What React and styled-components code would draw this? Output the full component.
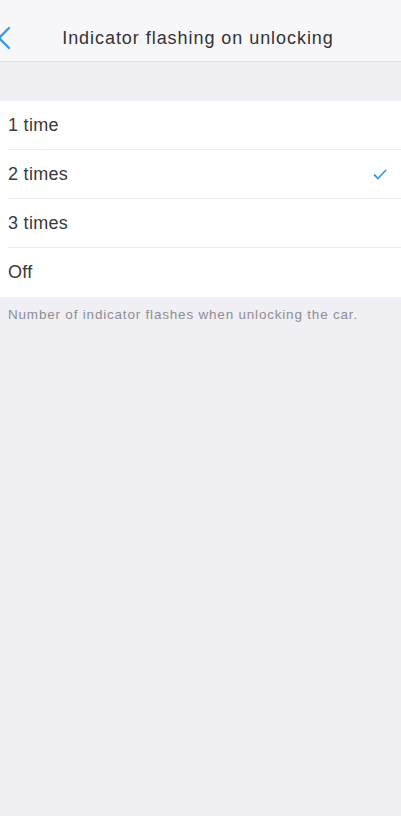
import React from "react";
import styled, { createGlobalStyle } from "styled-components";

const GlobalStyle = createGlobalStyle`
  html, body {
    margin: 0;
    padding: 0;
    background: #efeff4;
    font-family: "Liberation Sans", Arial, sans-serif;
    -webkit-font-smoothing: antialiased;
  }
`;

const options = ["1 time", "2 times", "3 times", "Off"];

const ChevronLeft = () => (
  <svg width="14" height="24" viewBox="0 0 14 24" fill="none">
    <path
      d="M11 2 L1 12 L11 22"
      stroke="#3d9be0"
      strokeWidth="2.4"
      strokeLinecap="round"
      strokeLinejoin="round"
    />
  </svg>
);

const Check = () => (
  <svg width="14" height="11" viewBox="0 0 14 11" fill="none">
    <path
      d="M1.5 6 L5 9.5 L12.5 1.5"
      stroke="#3d9be0"
      strokeWidth="1.8"
      strokeLinecap="round"
      strokeLinejoin="round"
    />
  </svg>
);

const App = () => {
  const selected = 1;
  return (
    <Page>
      <GlobalStyle />
      <NavBar>
        <BackButton>
          <ChevronLeft />
        </BackButton>
        <Title>Indicator flashing on unlocking</Title>
      </NavBar>
      <Spacer />
      <List>
        {options.map((label, i) => (
          <Row key={label} $last={i === options.length - 1}>
            <RowLabel>{label}</RowLabel>
            {i === selected && <Check />}
          </Row>
        ))}
      </List>
      <Footnote>Number of indicator flashes when unlocking the car.</Footnote>
    </Page>
  );
};

const Page = styled.div`
  min-height: 816px;
  background: #efeff4;
`;

const NavBar = styled.header`
  height: 62px;
  box-sizing: border-box;
  padding-top: 15px;
  display: flex;
  align-items: center;
  justify-content: center;
  position: relative;
  background: #f7f7f9;
  border-bottom: 1px solid #e2e2e6;
`;

const BackButton = styled.div`
  position: absolute;
  left: -2px;
  top: 26px;
  display: flex;
`;

const Title = styled.h1`
  margin: 0;
  padding-right: 5px;
  font-size: 18px;
  font-weight: 400;
  color: #333335;
  letter-spacing: 0.95px;
`;

const Spacer = styled.div`
  height: 39px;
`;

const List = styled.ul`
  margin: 0;
  padding: 0 0 0 8px;
  list-style: none;
  background: #fff;
`;

const Row = styled.li`
  height: 49px;
  box-sizing: border-box;
  display: flex;
  align-items: center;
  justify-content: space-between;
  padding-right: 14px;
  border-bottom: ${(p) => (p.$last ? "none" : "1px solid #ececef")};
`;

const RowLabel = styled.span`
  font-size: 18px;
  color: #3a3a3c;
  letter-spacing: 0.3px;
`;

const Footnote = styled.p`
  margin: 0;
  padding: 10px 8px 0;
  font-size: 13.5px;
  color: #8e8e93;
  letter-spacing: 0.8px;
`;

export default App;
